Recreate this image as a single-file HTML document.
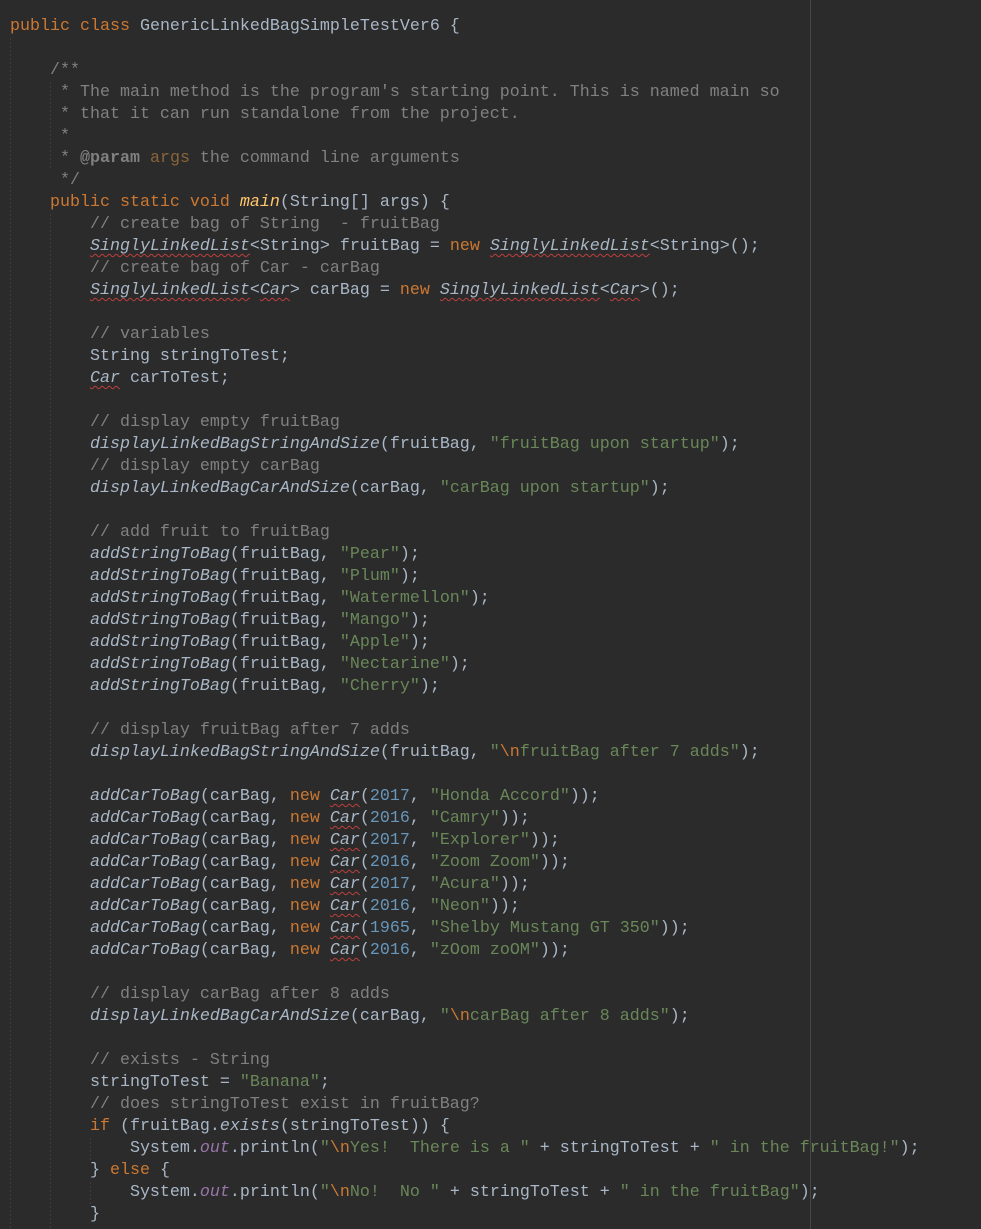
<!DOCTYPE html>
<html><head><meta charset="utf-8"><style>
html,body{margin:0;padding:0;background:#2b2b2b;width:981px;height:1229px;overflow:hidden;position:relative}
pre{margin:0;position:absolute;left:10px;top:16px;font-family:"Liberation Mono","Courier New",monospace;font-size:16.67px;line-height:22px;color:#a9b7c6;z-index:2}
.k{color:#cc7832}.c{color:#808080}.s{color:#6a8759}.n{color:#6897bb}.i{font-style:italic}
.m{color:#ffc66d;font-style:italic}.o{color:#9876aa;font-style:italic}.e{color:#cc7832}
.w{text-decoration:underline wavy #bc3f3c;text-decoration-thickness:1px;text-underline-offset:3px}
.t{font-weight:bold}.a{color:#8a653b}
.g{position:absolute;width:1px;background:repeating-linear-gradient(#3d3d3d 0 2px,transparent 2px 4px)}
.margin{position:absolute;left:810px;top:0;width:1px;height:1229px;background:#474747}
</style></head><body>
<div class="margin"></div>
<div class="g" style="left:10px;top:38px;height:1191px"></div>
<div class="g" style="left:50px;top:82px;height:88px"></div>
<div class="g" style="left:50px;top:214px;height:1015px"></div>
<div class="g" style="left:90px;top:1138px;height:22px"></div>
<div class="g" style="left:90px;top:1182px;height:22px"></div>
<pre><span class="k">public class</span> GenericLinkedBagSimpleTestVer6 {

    <span class="c">/**</span>
<span class="c">     * The main method is the program's starting point. This is named main so</span>
<span class="c">     * that it can run standalone from the project.</span>
<span class="c">     *</span>
<span class="c">     * <span class="t">@param</span> <span class="a">args</span> the command line arguments</span>
<span class="c">     */</span>
    <span class="k">public static void</span> <span class="m">main</span>(String[] args) {
        <span class="c">// create bag of String  - fruitBag</span>
        <span class="i w">SinglyLinkedList</span>&lt;String&gt; fruitBag = <span class="k">new</span> <span class="i w">SinglyLinkedList</span>&lt;String&gt;();
        <span class="c">// create bag of Car - carBag</span>
        <span class="i w">SinglyLinkedList</span>&lt;<span class="i w">Car</span>&gt; carBag = <span class="k">new</span> <span class="i w">SinglyLinkedList</span>&lt;<span class="i w">Car</span>&gt;();

        <span class="c">// variables</span>
        String stringToTest;
        <span class="i w">Car</span> carToTest;

        <span class="c">// display empty fruitBag</span>
        <span class="i">displayLinkedBagStringAndSize</span>(fruitBag, <span class="s">"fruitBag upon startup"</span>);
        <span class="c">// display empty carBag</span>
        <span class="i">displayLinkedBagCarAndSize</span>(carBag, <span class="s">"carBag upon startup"</span>);

        <span class="c">// add fruit to fruitBag</span>
        <span class="i">addStringToBag</span>(fruitBag, <span class="s">"Pear"</span>);
        <span class="i">addStringToBag</span>(fruitBag, <span class="s">"Plum"</span>);
        <span class="i">addStringToBag</span>(fruitBag, <span class="s">"Watermellon"</span>);
        <span class="i">addStringToBag</span>(fruitBag, <span class="s">"Mango"</span>);
        <span class="i">addStringToBag</span>(fruitBag, <span class="s">"Apple"</span>);
        <span class="i">addStringToBag</span>(fruitBag, <span class="s">"Nectarine"</span>);
        <span class="i">addStringToBag</span>(fruitBag, <span class="s">"Cherry"</span>);

        <span class="c">// display fruitBag after 7 adds</span>
        <span class="i">displayLinkedBagStringAndSize</span>(fruitBag, <span class="s">"<span class="e">\n</span>fruitBag after 7 adds"</span>);

        <span class="i">addCarToBag</span>(carBag, <span class="k">new</span> <span class="i w">Car</span>(<span class="n">2017</span>, <span class="s">"Honda Accord"</span>));
        <span class="i">addCarToBag</span>(carBag, <span class="k">new</span> <span class="i w">Car</span>(<span class="n">2016</span>, <span class="s">"Camry"</span>));
        <span class="i">addCarToBag</span>(carBag, <span class="k">new</span> <span class="i w">Car</span>(<span class="n">2017</span>, <span class="s">"Explorer"</span>));
        <span class="i">addCarToBag</span>(carBag, <span class="k">new</span> <span class="i w">Car</span>(<span class="n">2016</span>, <span class="s">"Zoom Zoom"</span>));
        <span class="i">addCarToBag</span>(carBag, <span class="k">new</span> <span class="i w">Car</span>(<span class="n">2017</span>, <span class="s">"Acura"</span>));
        <span class="i">addCarToBag</span>(carBag, <span class="k">new</span> <span class="i w">Car</span>(<span class="n">2016</span>, <span class="s">"Neon"</span>));
        <span class="i">addCarToBag</span>(carBag, <span class="k">new</span> <span class="i w">Car</span>(<span class="n">1965</span>, <span class="s">"Shelby Mustang GT 350"</span>));
        <span class="i">addCarToBag</span>(carBag, <span class="k">new</span> <span class="i w">Car</span>(<span class="n">2016</span>, <span class="s">"zOom zoOM"</span>));

        <span class="c">// display carBag after 8 adds</span>
        <span class="i">displayLinkedBagCarAndSize</span>(carBag, <span class="s">"<span class="e">\n</span>carBag after 8 adds"</span>);

        <span class="c">// exists - String</span>
        stringToTest = <span class="s">"Banana"</span>;
        <span class="c">// does stringToTest exist in fruitBag?</span>
        <span class="k">if</span> (fruitBag.<span class="i">exists</span>(stringToTest)) {
            System.<span class="o">out</span>.println(<span class="s">"<span class="e">\n</span>Yes!  There is a "</span> + stringToTest + <span class="s">" in the fruitBag!"</span>);
        } <span class="k">else</span> {
            System.<span class="o">out</span>.println(<span class="s">"<span class="e">\n</span>No!  No "</span> + stringToTest + <span class="s">" in the fruitBag"</span>);
        }
</pre>
</body></html>
